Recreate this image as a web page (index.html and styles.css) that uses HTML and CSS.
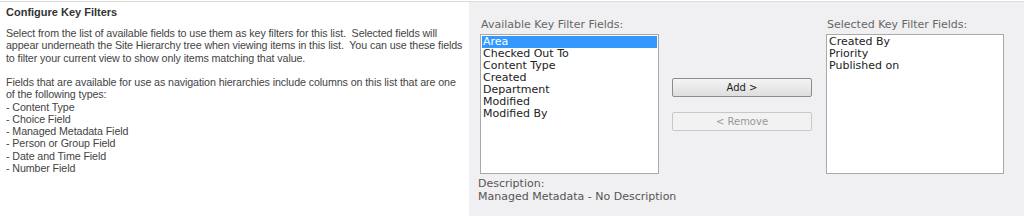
FILE: index.html
```html
<!DOCTYPE html>
<html>
<head>
<meta charset="utf-8">
<link rel="stylesheet" href="styles.css">
</head>
<body>
<div class="page">
  <div class="info">
    <h3 class="title">Configure Key Filters</h3>
    <p class="para">Select from the list of available fields to use them as key filters for this list.&nbsp; Selected fields will<br>appear underneath the Site Hierarchy tree when viewing items in this list.&nbsp; You can use these fields<br>to filter your current view to show only items matching that value.</p>
    <p class="para">Fields that are available for use as navigation hierarchies include columns on this list that are one<br>of the following types:<br>- Content Type<br>- Choice Field<br>- Managed Metadata Field<br>- Person or Group Field<br>- Date and Time Field<br>- Number Field</p>
  </div>
  <div class="panel">
    <div class="col">
      <div class="label">Available Key Filter Fields:</div>
      <div class="listbox">
        <div class="item selected">Area</div>
        <div class="item">Checked Out To</div>
        <div class="item">Content Type</div>
        <div class="item">Created</div>
        <div class="item">Department</div>
        <div class="item">Modified</div>
        <div class="item">Modified By</div>
      </div>
      <div class="desc">Description:<br>Managed Metadata - No Description</div>
    </div>
    <div class="buttons">
      <button class="btn">Add &gt;</button>
      <button class="btn disabled">&lt; Remove</button>
    </div>
    <div class="col col-right">
      <div class="label">Selected Key Filter Fields:</div>
      <div class="listbox listbox-right">
        <div class="item">Created By</div>
        <div class="item">Priority</div>
        <div class="item">Published on</div>
      </div>
    </div>
  </div>
</div>
</body>
</html>
```
FILE: styles.css
```css
html, body {
  margin: 0;
  padding: 0;
  background: #ffffff;
}
.page {
  display: flex;
  height: 215px;
  box-sizing: border-box;
  border-top: 1px solid #dcdcdc;
  margin-top: 1px;
}
.info {
  width: 469px;
  flex: none;
  box-sizing: border-box;
  padding: 4px 0 0 6px;
  font-family: "Liberation Sans", Arial, sans-serif;
  font-size: 10.7px;
  letter-spacing: -0.1px;
  color: #444;
  white-space: nowrap;
  overflow: hidden;
}
.title {
  margin: 0 0 9px 0;
  font-size: 11px;
  letter-spacing: 0;
  font-weight: bold;
  color: #333;
  line-height: 12px;
}
.para {
  margin: 0 0 12.25px 0;
  line-height: 12.25px;
}
.panel {
  flex: 1;
  background: #f0f0f2;
  display: flex;
  align-items: flex-start;
  padding: 15px 0 0 11px;
  font-family: "DejaVu Sans", Verdana, sans-serif;
  font-size: 11px;
}
.col {
  display: flex;
  flex-direction: column;
  width: 179px;
  flex: none;
}
.col-right {
  width: 178px;
}
.label {
  color: #666;
  line-height: 14px;
  padding-top: 1px;
  margin: 0 0 2px 1px;
  white-space: nowrap;
}
.listbox {
  width: 179px;
  height: 140px;
  box-sizing: border-box;
  background: #fff;
  border: 1px solid #a9a9a9;
  padding: 1px;
  color: #222;
}
.listbox-right {
  width: 178px;
}
.item {
  height: 12px;
  line-height: 12px;
  padding-left: 1px;
  white-space: nowrap;
}
.item.selected {
  background: #3399ff;
  color: #fff;
}
.desc {
  color: #555;
  line-height: 13px;
  margin: 3px 0 0 -2px;
  white-space: nowrap;
}
.buttons {
  display: flex;
  flex-direction: column;
  gap: 15px;
  margin: 61px 14px 0 13px;
  flex: none;
}
.btn {
  width: 140px;
  height: 19px;
  border: 1px solid #8c8c8c;
  border-radius: 2px;
  background: linear-gradient(#f4f4f4, #dedede);
  font-family: "DejaVu Sans", Verdana, sans-serif;
  font-size: 10px;
  color: #222;
  padding: 0;
}
.btn.disabled {
  border-color: #c8c8c8;
  background: #f2f2f2;
  color: #999;
}
```
